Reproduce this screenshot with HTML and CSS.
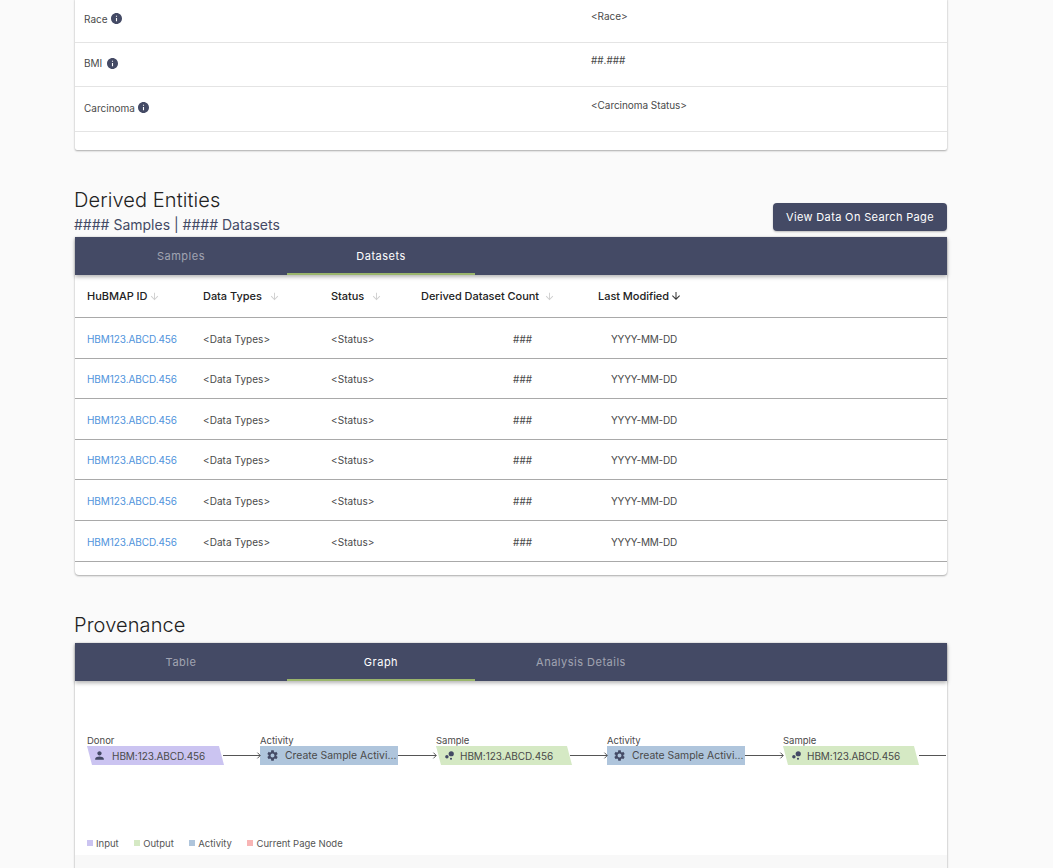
FILE: index.html
```html
<!DOCTYPE html>
<html lang="en">
<head>
<meta charset="utf-8">
<title>Donor</title>
<link rel="stylesheet" href="styles.css">
</head>
<body>
<svg class="defs" aria-hidden="true">
  <symbol id="i-info" viewBox="2 2 20 20"><path d="M12 2C6.48 2 2 6.48 2 12s4.48 10 10 10 10-4.48 10-10S17.52 2 12 2zm1 15h-2v-6h2v6zm0-8h-2V7h2v2z"/></symbol>
  <symbol id="i-arrow" viewBox="0 0 24 24"><path d="M20 12l-1.41-1.41L13 16.17V4h-2v12.17l-5.58-5.59L4 12l8 8 8-8z"/></symbol>
  <symbol id="i-person" viewBox="0 0 24 24"><path d="M12 12c2.21 0 4-1.79 4-4s-1.79-4-4-4-4 1.79-4 4 1.79 4 4 4zm0 2c-2.67 0-8 1.34-8 4v2h16v-2c0-2.66-5.33-4-8-4z"/></symbol>
  <symbol id="i-gear" viewBox="0 0 24 24"><path d="M19.14 12.94c.04-.3.06-.61.06-.94 0-.32-.02-.64-.07-.94l2.03-1.58c.18-.14.23-.41.12-.61l-1.92-3.32c-.12-.22-.37-.29-.59-.22l-2.39.96c-.5-.38-1.03-.7-1.62-.94l-.36-2.54c-.04-.24-.24-.41-.48-.41h-3.84c-.24 0-.43.17-.47.41l-.36 2.54c-.59.24-1.13.57-1.62.94l-2.39-.96c-.22-.08-.47 0-.59.22L2.74 8.87c-.12.21-.08.47.12.61l2.03 1.58c-.05.3-.09.63-.09.94s.02.64.07.94l-2.03 1.58c-.18.14-.23.41-.12.61l1.92 3.32c.12.22.37.29.59.22l2.39-.96c.5.38 1.03.7 1.62.94l.36 2.54c.05.24.24.41.48.41h3.84c.24 0 .44-.17.47-.41l.36-2.54c.59-.24 1.13-.56 1.62-.94l2.39.96c.22.08.47 0 .59-.22l1.92-3.32c.12-.22.07-.47-.12-.61l-2.01-1.58zM12 15.6c-1.98 0-3.6-1.62-3.6-3.6s1.62-3.6 3.6-3.6 3.6 1.62 3.6 3.6-1.62 3.6-3.6 3.6z"/></symbol>
  <symbol id="i-sample" viewBox="0 0 24 24"><circle cx="7.2" cy="14.4" r="3.2"/><circle cx="14.8" cy="18" r="2"/><circle cx="15.2" cy="8.8" r="4.8"/></symbol>
  <symbol id="i-edge" viewBox="0 0 10 8"><path d="M6 .8L9.2 4 6 7.2" fill="none" stroke="currentColor"/></symbol>
</svg>

<main class="page">
  <section class="card meta-card">
    <div class="meta-row"><div class="meta-label">Race <svg class="info"><use href="#i-info"/></svg></div><div class="meta-value">&lt;Race&gt;</div></div>
    <div class="meta-row"><div class="meta-label">BMI <svg class="info info-wide"><use href="#i-info"/></svg></div><div class="meta-value">##.###</div></div>
    <div class="meta-row"><div class="meta-label">Carcinoma <svg class="info"><use href="#i-info"/></svg></div><div class="meta-value">&lt;Carcinoma Status&gt;</div></div>
    <div class="meta-end"></div>
  </section>

  <section class="derived">
    <div class="section-head">
      <div class="section-text">
        <h2 class="section-title">Derived Entities</h2>
        <p class="section-sub">#### Samples | #### Datasets</p>
      </div>
      <a class="btn">View Data On Search Page</a>
    </div>
    <div class="card table-card">
      <div class="tabs">
        <div class="tab tab-w">Samples</div>
        <div class="tab tab-n active">Datasets</div>
      </div>
      <div class="grid-row head-row">
        <div class="th">HuBMAP ID<svg class="sort s1"><use href="#i-arrow"/></svg></div>
        <div class="th">Data Types<svg class="sort s2"><use href="#i-arrow"/></svg></div>
        <div class="th">Status<svg class="sort s2"><use href="#i-arrow"/></svg></div>
        <div class="th">Derived Dataset Count<svg class="sort s3"><use href="#i-arrow"/></svg></div>
        <div class="th">Last Modified<svg class="sort s1 on"><use href="#i-arrow"/></svg></div>
      </div>
      <div class="grid-row body-row"><a class="link">HBM123.ABCD.456</a><div>&lt;Data Types&gt;</div><div>&lt;Status&gt;</div><div class="count">###</div><div class="date">YYYY-MM-DD</div></div>
      <div class="grid-row body-row"><a class="link">HBM123.ABCD.456</a><div>&lt;Data Types&gt;</div><div>&lt;Status&gt;</div><div class="count">###</div><div class="date">YYYY-MM-DD</div></div>
      <div class="grid-row body-row"><a class="link">HBM123.ABCD.456</a><div>&lt;Data Types&gt;</div><div>&lt;Status&gt;</div><div class="count">###</div><div class="date">YYYY-MM-DD</div></div>
      <div class="grid-row body-row"><a class="link">HBM123.ABCD.456</a><div>&lt;Data Types&gt;</div><div>&lt;Status&gt;</div><div class="count">###</div><div class="date">YYYY-MM-DD</div></div>
      <div class="grid-row body-row"><a class="link">HBM123.ABCD.456</a><div>&lt;Data Types&gt;</div><div>&lt;Status&gt;</div><div class="count">###</div><div class="date">YYYY-MM-DD</div></div>
      <div class="grid-row body-row"><a class="link">HBM123.ABCD.456</a><div>&lt;Data Types&gt;</div><div>&lt;Status&gt;</div><div class="count">###</div><div class="date">YYYY-MM-DD</div></div>
      <div class="table-end"></div>
    </div>
  </section>

  <section class="provenance">
    <h2 class="section-title prov-title">Provenance</h2>
    <div class="card prov-card">
      <div class="tabs">
        <div class="tab tab-w">Table</div>
        <div class="tab tab-n active">Graph</div>
        <div class="tab tab-w">Analysis Details</div>
      </div>
      <div class="graph">
        <div class="flow">
          <div class="node node-donor"><span class="node-type">Donor</span><div class="shape shape-slant input"><svg class="node-icon"><use href="#i-person"/></svg><span class="node-id">HBM:123.ABCD.456</span></div></div>
          <div class="edge e1"><svg class="head"><use href="#i-edge"/></svg></div>
          <div class="node node-activity"><span class="node-type">Activity</span><div class="shape activity"><svg class="node-icon"><use href="#i-gear"/></svg><span>Create Sample Activi...</span></div></div>
          <div class="edge e2"><svg class="head"><use href="#i-edge"/></svg></div>
          <div class="node node-sample"><span class="node-type">Sample</span><div class="shape shape-slant output"><svg class="node-icon"><use href="#i-sample"/></svg><span class="node-id">HBM:123.ABCD.456</span></div></div>
          <div class="edge e3"><svg class="head"><use href="#i-edge"/></svg></div>
          <div class="node node-activity"><span class="node-type">Activity</span><div class="shape activity"><svg class="node-icon"><use href="#i-gear"/></svg><span>Create Sample Activi...</span></div></div>
          <div class="edge e2 e4"><svg class="head"><use href="#i-edge"/></svg></div>
          <div class="node node-sample"><span class="node-type">Sample</span><div class="shape shape-slant output"><svg class="node-icon"><use href="#i-sample"/></svg><span class="node-id">HBM:123.ABCD.456</span></div></div>
          <div class="edge e5"></div>
        </div>
        <div class="legend">
          <div class="legend-item"><i class="swatch input"></i>Input</div>
          <div class="legend-item"><i class="swatch output"></i>Output</div>
          <div class="legend-item"><i class="swatch activity"></i>Activity</div>
          <div class="legend-item"><i class="swatch current"></i>Current Page Node</div>
        </div>
      </div>
      <div class="prov-foot"></div>
    </div>
  </section>
</main>
</body>
</html>
```

FILE: styles.css
```css
* { box-sizing: border-box; }
html, body { height: 868px; overflow: hidden; }
body {
  margin: 0;
  background: #fafafa;
  font-family: Inter, "Liberation Sans", sans-serif;
  color: #444;
}
.defs { position: absolute; width: 0; height: 0; }
.page { width: 872px; margin: -1.5px 0 0 75px; }

.card {
  background: #fff;
  box-shadow: 0 1px 2px rgba(0, 0, 0, .3), 0 0 2px rgba(0, 0, 0, .1);
}

/* metadata */
.meta-card { height: 151.5px; border-radius: 0 0 2px 2px; }
.meta-row {
  height: 44.4px;
  display: grid;
  grid-template-columns: 516px 1fr;
  border-bottom: 1px solid #e4e4e4;
  font-size: 10px;
  line-height: 14px;
  color: #4a4a4a;
}
.meta-label { padding: 13px 0 0 9px; display: flex; align-items: center; height: 27.6px; gap: 3px; }
.meta-value { padding-top: 10.5px; letter-spacing: -.05px; }
.info { width: 11px; height: 11px; fill: #444a65; }
.info-wide { margin-left: 2px; }
.meta-end { height: 18px; }

/* headings */
.derived { margin-top: 34px; }
.section-head { display: flex; justify-content: space-between; align-items: flex-end; height: 48px; margin-left: -1px; }
.section-text { margin-bottom: -3px; }
.section-title { margin: 0; font-size: 20px; line-height: 24px; font-weight: 300; color: #222; letter-spacing: .1px; }
.section-sub { margin: 3px 0 0; font-size: 14px; line-height: 20px; color: #444a65; }
.btn {
  width: 174px;
  height: 28px;
  margin-bottom: 1px;
  border-radius: 4px;
  background: #444a65;
  color: #fff;
  font-size: 11px;
  line-height: 28px;
  text-align: center;
  letter-spacing: .35px;
  box-shadow: 0 1px 2px rgba(0, 0, 0, .25);
}

/* tabs */
.table-card { margin-top: 5px; height: 338px; border-radius: 0 0 4px 4px; }
.tabs {
  height: 38px;
  display: flex;
  background: #444a65;
  box-shadow: 0 2px 4px rgba(0, 0, 0, .3);
  position: relative;
}
.tab {
  display: flex;
  align-items: center;
  justify-content: center;
  height: 38px;
  font-size: 11px;
  font-weight: 400;
  letter-spacing: .5px;
  color: rgba(255, 255, 255, .5);
}
.tab-w { width: 212px; }
.tab-n { width: 188px; }
.tab.active { color: #fff; border-bottom: 2px solid #9ab56c; padding-top: 2px; }

/* table */
.grid-row {
  display: grid;
  grid-template-columns: 116px 128px 90px 177px 1fr;
  padding-left: 12px;
  align-items: center;
  border-bottom: 1px solid #a9a9a9;
}
.head-row { height: 43px; padding-bottom: 0; }
.th { display: flex; align-items: center; font-size: 11px; font-weight: 500; color: #222; letter-spacing: -.04px; }
.sort { width: 11px; height: 11px; fill: #cfcfcf; margin-left: 2px; }
.s2 { margin-left: 7px; }
.s3 { margin-left: 5px; }
.sort.on { fill: #333; width: 12px; height: 12px; margin-left: 1px; }
.body-row { height: 40.6px; padding-top: 1.5px; font-size: 10px; letter-spacing: .05px; color: #4a4a4a; }
.link { color: #4f93dc; letter-spacing: -.08px; }
.count { padding-left: 92px; }
.date { padding-left: 13px; letter-spacing: -.2px; }
.table-end { height: 14px; }

/* provenance */
.provenance { margin-top: 37px; }
.prov-title { line-height: 26px; margin-left: -1px; }
.prov-card { margin-top: 5px; }
.graph { height: 174px; padding: 53px 0 0 12px; display: flex; flex-direction: column; background: #fff; }
.flow { display: flex; align-items: flex-end; height: 31px; overflow: hidden; }
.node { flex: none; display: flex; flex-direction: column; }
.node-type { font-size: 9.5px; line-height: 12px; color: #4a4a4a; padding-top: 1px; margin-bottom: -1px; }
.shape {
  height: 19px;
  display: flex;
  align-items: center;
  font-size: 10.4px;
  color: #4a4a4a;
  white-space: nowrap;
}
.node-id { font-size: 10px; letter-spacing: -.05px; }
.shape-slant { clip-path: polygon(0 0, calc(100% - 5px) 0, 100% 100%, 5px 100%); }
.input { background: #cbc4f1; }
.output { background: #d5e9c4; }
.activity { background: #afc5dc; }
.current { background: #f8b5b5; }
.node-donor { width: 137px; }
.node-donor .shape { padding-left: 6px; }
.node-activity { width: 138px; }
.node-activity .shape { padding-left: 6px; }
.node-sample { width: 136px; }
.node-sample .shape { padding-left: 7px; }
.node-sample .node-icon { margin-right: 4px; }
.node-icon { width: 13px; height: 13px; fill: #444a65; margin-right: 6px; flex: none; }
.edge {
  flex: none;
  height: 1px;
  background: #555;
  margin-bottom: 9px;
  position: relative;
}
.e1 { width: 37px; margin-left: -1px; }
.e2 { width: 38px; }
.e3 { width: 37px; margin-left: -2px; }
.e5 { width: 27px; }
.head { position: absolute; right: -1px; top: -4px; width: 9px; height: 9px; color: #444; }

.legend { display: flex; margin-top: auto; margin-bottom: 6px; font-size: 9.5px; color: #555; }
.legend-item { display: flex; align-items: center; height: 12px; margin-right: 15.5px; }
.swatch { width: 6px; height: 6px; margin-right: 3px; display: block; }
.prov-foot { height: 20px; background: #f8f8f8; }
```
